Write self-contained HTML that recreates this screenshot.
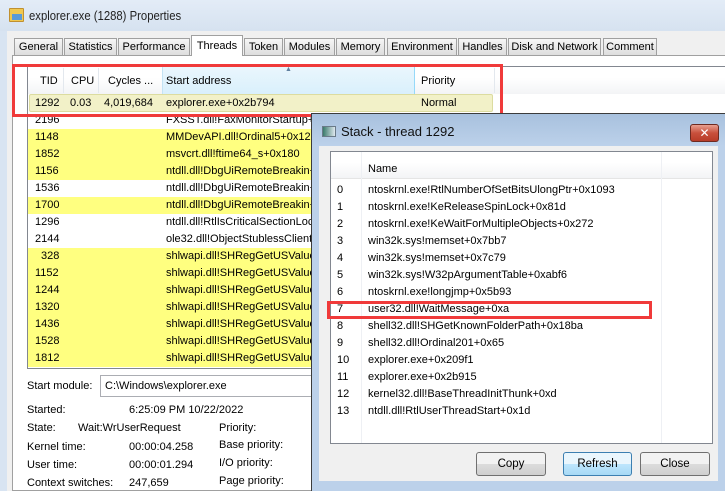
<!DOCTYPE html>
<html><head><style>
*{margin:0;padding:0;box-sizing:border-box}
body{width:725px;height:491px;overflow:hidden;position:relative;background:#f0f0f0;font-family:"Liberation Sans","DejaVu Sans",sans-serif;font-size:11px;color:#000}
.a{position:absolute;white-space:nowrap}
.tab{position:absolute;top:38px;height:18px;border:1px solid #a0a0a0;border-bottom:none;background:linear-gradient(#f6f6f6,#dcdcdc);font-size:11px;line-height:16px;text-align:center}
.row{position:absolute;left:28px;width:285px;height:17px;line-height:17px}
.y{background:#ffff80}
.srow{position:absolute;left:337px;height:17px;line-height:17px}
.btn{position:absolute;top:452px;height:24px;border:1px solid #707070;border-radius:3px;background:linear-gradient(#f2f2f2 50%,#dcdcdc 50%,#cfcfcf);text-align:center;line-height:22px;font-size:11.5px}
</style></head><body>
<div class="a" style="left:0;top:0;width:725px;height:491px;background:#d8e4f2"></div>
<div class="a" style="left:0;top:0;width:725px;height:31px;background:linear-gradient(#e3ecf7,#d6e2f0)"></div>
<div class="a" style="left:9px;top:8px;width:15px;height:14px;background:#f0c850;border:1px solid #c09030;border-radius:1px"></div>
<div class="a" style="left:12px;top:14px;width:10px;height:6px;background:#5a9ad8"></div>
<div class="a" style="left:29px;top:8px;font-size:13px;color:#222;transform:scaleX(0.87);transform-origin:0 0">explorer.exe (1288) Properties</div>
<div class="a" style="left:7px;top:31px;width:718px;height:460px;background:#f0f0f0"></div>
<div class="tab" style="left:14px;width:49px">General</div>
<div class="tab" style="left:64px;width:53px">Statistics</div>
<div class="tab" style="left:118px;width:72px">Performance</div>
<div class="tab" style="left:191px;width:52px;top:35px;height:21px;background:#fff;line-height:20px;z-index:2">Threads</div>
<div class="tab" style="left:244px;width:39px">Token</div>
<div class="tab" style="left:284px;width:51px">Modules</div>
<div class="tab" style="left:336px;width:49px">Memory</div>
<div class="tab" style="left:387px;width:70px">Environment</div>
<div class="tab" style="left:458px;width:49px">Handles</div>
<div class="tab" style="left:508px;width:93px">Disk and Network</div>
<div class="tab" style="left:603px;width:54px">Comment</div>
<div class="a" style="left:12px;top:55px;width:713px;height:436px;background:#fff;border:1px solid #a0a0a0;border-right:none"></div>
<div class="a" style="left:27px;top:66px;width:698px;height:303px;border:1px solid #828790;border-right:none;background:#fff"></div>
<div class="a" style="left:28px;top:67px;width:697px;height:27px;background:linear-gradient(#fff 40%,#f3f4f6)"></div>
<div class="a" style="left:162px;top:67px;width:253px;height:27px;background:linear-gradient(#eaf6fd,#d9f0fc);border-left:1px solid #c4e3f4;border-right:1px solid #96d9f9"></div>
<div class="a" style="left:63px;top:68px;width:1px;height:25px;background:#e3e8ee"></div>
<div class="a" style="left:98px;top:68px;width:1px;height:25px;background:#e3e8ee"></div>
<div class="a" style="left:494px;top:68px;width:1px;height:25px;background:#e3e8ee"></div>
<div class="a" style="left:40px;top:75px">TID</div>
<div class="a" style="left:71px;top:75px">CPU</div>
<div class="a" style="left:108px;top:75px">Cycles ...</div>
<div class="a" style="left:166px;top:75px">Start address</div>
<div class="a" style="left:285px;top:66px;font-size:7px;color:#6080a0">▲</div>
<div class="a" style="left:421px;top:75px">Priority</div>
<div class="a" style="left:29px;top:94px;width:464px;height:18px;background:#f2f1c8;border:1px solid #dcdca0;border-radius:2px"></div>
<div class="a" style="left:35px;top:97px">1292</div><div class="a" style="left:70px;top:97px">0.03</div><div class="a" style="left:104px;top:97px">4,019,684</div><div class="a" style="left:166px;top:97px">explorer.exe+0x2b794</div><div class="a" style="left:421px;top:97px">Normal</div>
<div class="row" style="top:112px"><span class="a" style="left:7px">2196</span><span class="a" style="left:138px">FXSST.dll!FaxMonitorStartup+</span></div>
<div class="row y" style="top:129px"><span class="a" style="left:7px">1148</span><span class="a" style="left:138px">MMDevAPI.dll!Ordinal5+0x12</span></div>
<div class="row y" style="top:146px"><span class="a" style="left:7px">1852</span><span class="a" style="left:138px">msvcrt.dll!ftime64_s+0x180</span></div>
<div class="row y" style="top:163px"><span class="a" style="left:7px">1156</span><span class="a" style="left:138px">ntdll.dll!DbgUiRemoteBreakin+</span></div>
<div class="row" style="top:180px"><span class="a" style="left:7px">1536</span><span class="a" style="left:138px">ntdll.dll!DbgUiRemoteBreakin+</span></div>
<div class="row y" style="top:197px"><span class="a" style="left:7px">1700</span><span class="a" style="left:138px">ntdll.dll!DbgUiRemoteBreakin+</span></div>
<div class="row" style="top:214px"><span class="a" style="left:7px">1296</span><span class="a" style="left:138px">ntdll.dll!RtlIsCriticalSectionLock</span></div>
<div class="row" style="top:231px"><span class="a" style="left:7px">2144</span><span class="a" style="left:138px">ole32.dll!ObjectStublessClient</span></div>
<div class="row y" style="top:248px"><span class="a" style="left:13px">328</span><span class="a" style="left:138px">shlwapi.dll!SHRegGetUSValueW</span></div>
<div class="row y" style="top:265px"><span class="a" style="left:7px">1152</span><span class="a" style="left:138px">shlwapi.dll!SHRegGetUSValueW</span></div>
<div class="row y" style="top:282px"><span class="a" style="left:7px">1244</span><span class="a" style="left:138px">shlwapi.dll!SHRegGetUSValueW</span></div>
<div class="row y" style="top:299px"><span class="a" style="left:7px">1320</span><span class="a" style="left:138px">shlwapi.dll!SHRegGetUSValueW</span></div>
<div class="row y" style="top:316px"><span class="a" style="left:7px">1436</span><span class="a" style="left:138px">shlwapi.dll!SHRegGetUSValueW</span></div>
<div class="row y" style="top:333px"><span class="a" style="left:7px">1528</span><span class="a" style="left:138px">shlwapi.dll!SHRegGetUSValueW</span></div>
<div class="row y" style="top:350px"><span class="a" style="left:7px">1812</span><span class="a" style="left:138px">shlwapi.dll!SHRegGetUSValueW</span></div>
<div class="a" style="left:12px;top:64px;width:491px;height:53px;border:3px solid #f03a3a"></div>
<div class="a" style="left:27px;top:380px">Start module:</div>
<div class="a" style="left:100px;top:375px;width:230px;height:22px;border:1px solid #abadb3;background:#fff"></div>
<div class="a" style="left:105px;top:380px">C:\Windows\explorer.exe</div>
<div class="a" style="left:27px;top:404px">Started:</div><div class="a" style="left:129px;top:404px">6:25:09 PM 10/22/2022</div>
<div class="a" style="left:27px;top:422px">State:</div><div class="a" style="left:78px;top:422px">Wait:WrUserRequest</div><div class="a" style="left:219px;top:422px">Priority:</div>
<div class="a" style="left:27px;top:441px">Kernel time:</div><div class="a" style="left:129px;top:441px">00:00:04.258</div><div class="a" style="left:219px;top:439px">Base priority:</div>
<div class="a" style="left:27px;top:459px">User time:</div><div class="a" style="left:129px;top:459px">00:00:01.294</div><div class="a" style="left:219px;top:457px">I/O priority:</div>
<div class="a" style="left:27px;top:477px">Context switches:</div><div class="a" style="left:129px;top:477px">247,659</div><div class="a" style="left:219px;top:475px">Page priority:</div>
<!-- stack window -->
<div class="a" style="left:311px;top:113px;width:414px;height:378px;border:1px solid #3c3c3c;border-right:none;border-bottom:none;background:#f0f0f0"></div>
<div class="a" style="left:312px;top:114px;width:413px;height:32px;background:linear-gradient(#a8c1de,#bcd1ea)"></div>
<div class="a" style="left:312px;top:146px;width:7px;height:345px;background:#bcd1ea"></div>
<div class="a" style="left:718px;top:146px;width:7px;height:345px;background:#bcd1ea"></div>
<div class="a" style="left:312px;top:481px;width:413px;height:10px;background:#bcd1ea"></div>
<div class="a" style="left:319px;top:146px;width:399px;height:335px;background:#f0f0f0"></div>
<div class="a" style="left:322px;top:126px;width:14px;height:11px;border:1px solid #6a7a88;background:linear-gradient(90deg,#3a7a6a,#dfe8ef)"></div>
<div class="a" style="left:341px;top:124px;font-size:13px;color:#111">Stack - thread 1292</div>
<div class="a" style="left:690px;top:124px;width:29px;height:18px;border:1px solid #6e2a20;border-radius:3px;background:linear-gradient(#e8a090,#c8503c 50%,#b83c28);color:#fff;font-size:12px;font-weight:bold;text-align:center;line-height:16px">✕</div>
<div class="a" style="left:330px;top:151px;width:383px;height:293px;border:1px solid #828790;background:#fff"></div>
<div class="a" style="left:331px;top:152px;width:381px;height:27px;background:linear-gradient(#fff 40%,#f3f4f6);border-bottom:1px solid #e5e5e5"></div>
<div class="a" style="left:361px;top:152px;width:1px;height:291px;background:#eef0f4"></div>
<div class="a" style="left:661px;top:152px;width:1px;height:291px;background:#eef0f4"></div>
<div class="a" style="left:368px;top:163px">Name</div>
<div class="srow" style="top:182px">0</div><div class="srow" style="top:182px;left:368px">ntoskrnl.exe!RtlNumberOfSetBitsUlongPtr+0x1093</div>
<div class="srow" style="top:199px">1</div><div class="srow" style="top:199px;left:368px">ntoskrnl.exe!KeReleaseSpinLock+0x81d</div>
<div class="srow" style="top:216px">2</div><div class="srow" style="top:216px;left:368px">ntoskrnl.exe!KeWaitForMultipleObjects+0x272</div>
<div class="srow" style="top:233px">3</div><div class="srow" style="top:233px;left:368px">win32k.sys!memset+0x7bb7</div>
<div class="srow" style="top:250px">4</div><div class="srow" style="top:250px;left:368px">win32k.sys!memset+0x7c79</div>
<div class="srow" style="top:267px">5</div><div class="srow" style="top:267px;left:368px">win32k.sys!W32pArgumentTable+0xabf6</div>
<div class="srow" style="top:284px">6</div><div class="srow" style="top:284px;left:368px">ntoskrnl.exe!longjmp+0x5b93</div>
<div class="srow" style="top:301px">7</div><div class="srow" style="top:301px;left:368px">user32.dll!WaitMessage+0xa</div>
<div class="srow" style="top:318px">8</div><div class="srow" style="top:318px;left:368px">shell32.dll!SHGetKnownFolderPath+0x18ba</div>
<div class="srow" style="top:335px">9</div><div class="srow" style="top:335px;left:368px">shell32.dll!Ordinal201+0x65</div>
<div class="srow" style="top:352px">10</div><div class="srow" style="top:352px;left:368px">explorer.exe+0x209f1</div>
<div class="srow" style="top:369px">11</div><div class="srow" style="top:369px;left:368px">explorer.exe+0x2b915</div>
<div class="srow" style="top:386px">12</div><div class="srow" style="top:386px;left:368px">kernel32.dll!BaseThreadInitThunk+0xd</div>
<div class="srow" style="top:403px">13</div><div class="srow" style="top:403px;left:368px">ntdll.dll!RtlUserThreadStart+0x1d</div>
<div class="a" style="left:327px;top:301px;width:325px;height:18px;border:3px solid #f03a3a"></div>
<div class="btn" style="left:476px;width:70px">Copy</div>
<div class="btn" style="left:563px;width:69px;border-color:#3c7fb1;background:linear-gradient(#eaf6fd 50%,#bee6fd 50%,#a7d9f5)">Refresh</div>
<div class="btn" style="left:640px;width:70px">Close</div>
</body></html>
